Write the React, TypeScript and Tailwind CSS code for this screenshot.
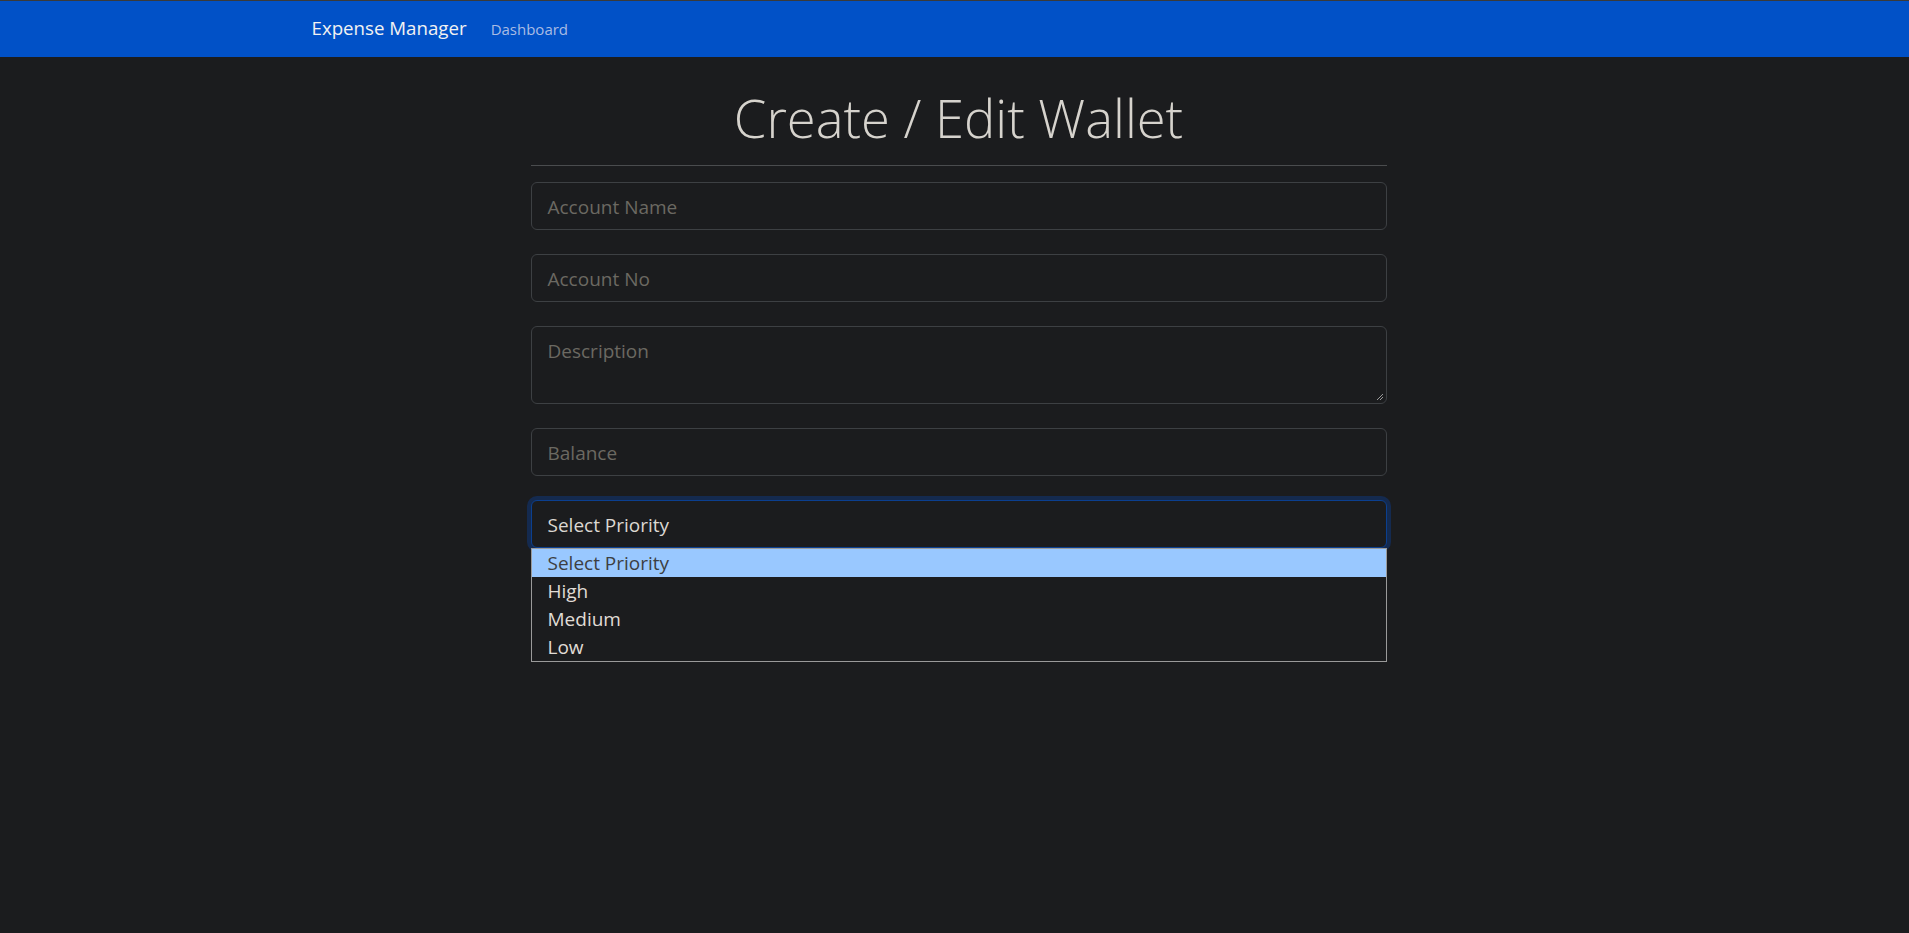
import React from "react";

const font = { fontFamily: '"Open Sans", "Noto Sans", "Liberation Sans", sans-serif' };

function Field({ placeholder }: { placeholder: string }) {
  return (
    <div className="mb-6 h-[48px] rounded-[6px] border border-[#3d4043] bg-[#1b1c1e] px-4 pt-[2px] flex items-center">
      <span className="text-[19px] text-[#6b6962] leading-[30px]">{placeholder}</span>
    </div>
  );
}

export default function App() {
  return (
    <div className="min-h-[933px] bg-[#1b1c1e]" style={font}>
      <nav className="h-[57px] border-t border-[#3a3a3a] bg-[#0151c7]">
        <div className="mx-auto flex h-full w-[1320px] items-center px-3 pb-[1px]">
          <span className="ml-[5px] mr-[24px] text-[18.7px] text-[#f2f2f2]">Expense Manager</span>
          <span className="mt-[1px] text-[15px] text-[#a9bce4]">Dashboard</span>
        </div>
      </nav>
      <div className="mx-auto w-[1320px]">
        <main className="ml-[236px] w-[856px]">
          <h1 className="mt-[27px] text-center text-[52.5px] font-light leading-[67px] text-[#d6d3cd]">
            Create / Edit Wallet
          </h1>
          <div className="mt-[14px] mb-4 h-px bg-[#4a4c4e]" />
          <Field placeholder="Account Name" />
          <Field placeholder="Account No" />
          <div className="relative mb-6 h-[78px] rounded-[6px] border border-[#3d4043] bg-[#1b1c1e] px-4 pt-[9px]">
            <span className="text-[19px] leading-[30px] text-[#6b6962]">Description</span>
            <svg className="absolute right-[2px] bottom-[2px]" width="8" height="8" viewBox="0 0 8 8">
              <line x1="1" y1="7" x2="7" y2="1" stroke="#9a9a9a" strokeWidth="1" />
              <line x1="4" y1="7" x2="7" y2="4" stroke="#9a9a9a" strokeWidth="1" />
            </svg>
          </div>
          <Field placeholder="Balance" />
          <div className="relative">
            <div className="h-[48px] rounded-[6px] border border-[#0b3f8f] bg-[#1b1c1e] px-4 pt-[2px] flex items-center shadow-[0_0_0_4px_rgba(13,60,140,0.45)]">
              <span className="text-[19px] leading-[30px] text-[#dcd8d2]">Select Priority</span>
            </div>
            <div className="absolute left-0 right-0 top-[48px] border border-[#9a9a9a] bg-[#1b1c1e]">
              <div className="h-[28px] bg-[#99c8ff] px-4 text-[19px] leading-[28px] text-[#3d3f42]">Select Priority</div>
              <div className="h-[28px] px-4 text-[19px] leading-[28px] text-[#e0dcd6]">High</div>
              <div className="h-[28px] px-4 text-[19px] leading-[28px] text-[#e0dcd6]">Medium</div>
              <div className="h-[28px] px-4 text-[19px] leading-[28px] text-[#e0dcd6]">Low</div>
            </div>
          </div>
        </main>
      </div>
    </div>
  );
}
